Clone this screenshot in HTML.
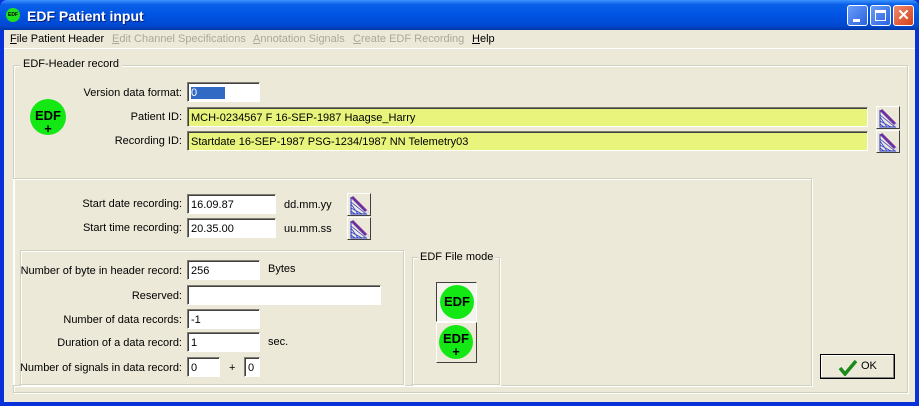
<!DOCTYPE html>
<html><head><style>
*{margin:0;padding:0;box-sizing:border-box}
body{width:919px;height:406px;overflow:hidden;background:#0831d9;font-family:"Liberation Sans",Tahoma,sans-serif;font-size:11px;color:#000;position:relative}
.a{position:absolute}
#title{left:0;top:0;width:919px;height:30px;background:linear-gradient(#3d95ff 0%,#0a5fe8 15%,#0054e3 50%,#0049d1 85%,#0037a8 100%);border-radius:7px 7px 0 0}
#client{left:4px;top:30px;width:911px;height:372px;background:#ece9d8}
.tb{color:#fff;font-weight:bold;font-size:14px;left:27px;top:8px;text-shadow:1px 1px #0a1e7a}
.btn{top:5px;width:21px;height:21px;border:1px solid #fff;border-radius:3px;background:linear-gradient(135deg,#6a9ef8,#2a62e0)}
.menu span{position:absolute;top:33px;font-size:11px}
.dis{color:#aca899}
.grp{border:1px solid #d0d0bf;box-shadow:inset 1px 1px #fff,1px 1px #fff}
.lbl{text-align:right;width:180px;left:2px}
.in{background:#fff;border:1px solid;border-color:#7f7d70 #fff #fff #7f7d70;box-shadow:inset 1px 1px #404040;padding:4px 0 0 3px;line-height:13px;height:20px}
.yel{background:#e8f47c}
.pen{width:24px;height:23px;background:#ece9d8;border:1px solid;border-color:#fff #404040 #404040 #fff}
.edf{border-radius:50%;background:#14e814;color:#000;font-weight:bold;text-align:center;font-size:13px;line-height:13px}
</style></head><body>
<div id="title" class="a"></div>
<div class="a" style="left:6px;top:8px;width:14px;height:14px;border-radius:50%;background:#1ee01e;font-size:5px;font-weight:bold;text-align:center;line-height:14px">EDF</div>
<div class="a tb">EDF Patient input</div>
<div class="a btn" style="left:847px"><div class="a" style="left:5px;top:13px;width:7px;height:3px;background:#fff"></div></div>
<div class="a btn" style="left:870px"><div class="a" style="left:4px;top:4px;width:11px;height:11px;border:1px solid #fff;border-top-width:3px"></div></div>
<div class="a btn" style="left:893px;background:linear-gradient(135deg,#f08a6a,#d2401c);color:#fff;font-weight:bold;font-size:15px;text-align:center;line-height:19px">✕</div>
<div id="client" class="a"></div>
<div class="a" style="left:4px;top:48px;width:911px;height:1px;background:#fff"></div>
<div class="menu">
<span style="left:10px"><u>F</u>ile Patient Header</span>
<span class="dis" style="left:112px"><u>E</u>dit Channel Specifications</span>
<span class="dis" style="left:253px"><u>A</u>nnotation Signals</span>
<span class="dis" style="left:353px"><u>C</u>reate EDF Recording</span>
<span style="left:472px"><u>H</u>elp</span>
</div>
<div class="a grp" style="left:13px;top:65px;width:895px;height:328px"></div>
<div class="a" style="left:20px;top:58px;background:#ece9d8;padding:0 3px">EDF-Header record</div>
<div class="a edf" style="left:30px;top:99px;width:36px;height:36px;padding-top:10px">EDF<br>+</div>
<div class="a lbl" style="top:87px">Version data format:</div>
<div class="a in" style="left:187px;top:82px;width:73px"><span style="background:#316ac5;color:#fff;padding-right:28px">0</span></div>
<div class="a lbl" style="top:111px">Patient ID:</div>
<div class="a in yel" style="left:187px;top:107px;width:681px">MCH-0234567 F 16-SEP-1987 Haagse_Harry</div>
<div class="a lbl" style="top:135px">Recording ID:</div>
<div class="a in yel" style="left:187px;top:131px;width:681px">Startdate 16-SEP-1987 PSG-1234/1987 NN Telemetry03</div>
<svg width="0" height="0" style="position:absolute"><defs><g id="p"><path d="M3 3 L3 20 L20 20" fill="none" stroke="#2030c0" stroke-width="1"/><path d="M3 10L10 20M3 14L14 20M3 17L7 20M3 8L18 20" stroke="#3040d0" stroke-width="0.8"/><path d="M4 3 L20 19" stroke="#7030a0" stroke-width="3"/><path d="M18 17 L21 20" stroke="#e0e0e0" stroke-width="3"/></g></defs></svg>
<div class="a pen" style="left:876px;top:106px"><svg width="22" height="21"><use href="#p"/></svg></div>
<div class="a pen" style="left:876px;top:130px"><svg width="22" height="21"><use href="#p"/></svg></div>
<div class="a grp" style="left:13px;top:178px;width:799px;height:208px;border-left:none"></div>
<div class="a lbl" style="top:198px">Start date recording:</div>
<div class="a in" style="left:187px;top:194px;width:89px">16.09.87</div>
<div class="a" style="left:284px;top:199px">dd.mm.yy</div>
<div class="a pen" style="left:347px;top:193px"><svg width="22" height="21"><use href="#p"/></svg></div>
<div class="a lbl" style="top:222px">Start time recording:</div>
<div class="a in" style="left:187px;top:218px;width:89px">20.35.00</div>
<div class="a" style="left:284px;top:223px">uu.mm.ss</div>
<div class="a pen" style="left:347px;top:217px"><svg width="22" height="21"><use href="#p"/></svg></div>
<div class="a grp" style="left:20px;top:250px;width:384px;height:135px"></div>
<div class="a grp" style="left:412px;top:257px;width:88px;height:128px"></div>
<div class="a" style="left:418px;top:251px;background:#ece9d8;padding:0 2px">EDF File mode</div>
<div class="a lbl" style="top:265px">Number of byte in header record:</div>
<div class="a in" style="left:187px;top:260px;width:73px">256</div>
<div class="a" style="left:268px;top:263px">Bytes</div>
<div class="a lbl" style="top:290px">Reserved:</div>
<div class="a in" style="left:187px;top:285px;width:194px"></div>
<div class="a lbl" style="top:314px">Number of data records:</div>
<div class="a in" style="left:187px;top:309px;width:73px">-1</div>
<div class="a lbl" style="top:337px">Duration of a data record:</div>
<div class="a in" style="left:187px;top:332px;width:73px">1</div>
<div class="a" style="left:268px;top:336px">sec.</div>
<div class="a lbl" style="top:362px">Number of signals in data record:</div>
<div class="a in" style="left:187px;top:357px;width:33px">0</div>
<div class="a" style="left:229px;top:362px">+</div>
<div class="a in" style="left:244px;top:357px;width:16px">0</div>
<div class="a" style="left:436px;top:282px;width:41px;height:40px;background:#f4f3ee;border:1px solid;border-color:#404040 #fff #fff #404040"></div>
<div class="a edf" style="left:440px;top:285px;width:34px;height:34px;line-height:34px">EDF</div>
<div class="a" style="left:436px;top:322px;width:41px;height:41px;border:1px solid;border-color:#fff #404040 #404040 #fff"></div>
<div class="a edf" style="left:439px;top:325px;width:34px;height:34px;padding-top:7px">EDF<br>+</div>
<div class="a" style="left:820px;top:354px;width:75px;height:25px;border:1px solid #000;box-shadow:inset -1px -1px #808080,inset 1px 1px #fff;line-height:23px;padding-left:40px">OK</div>
<svg class="a" style="left:838px;top:358px" width="20" height="18"><path d="M2 10 L7 16 L18 3" fill="none" stroke="#1a8a1a" stroke-width="3.5"/></svg>
</body></html>
